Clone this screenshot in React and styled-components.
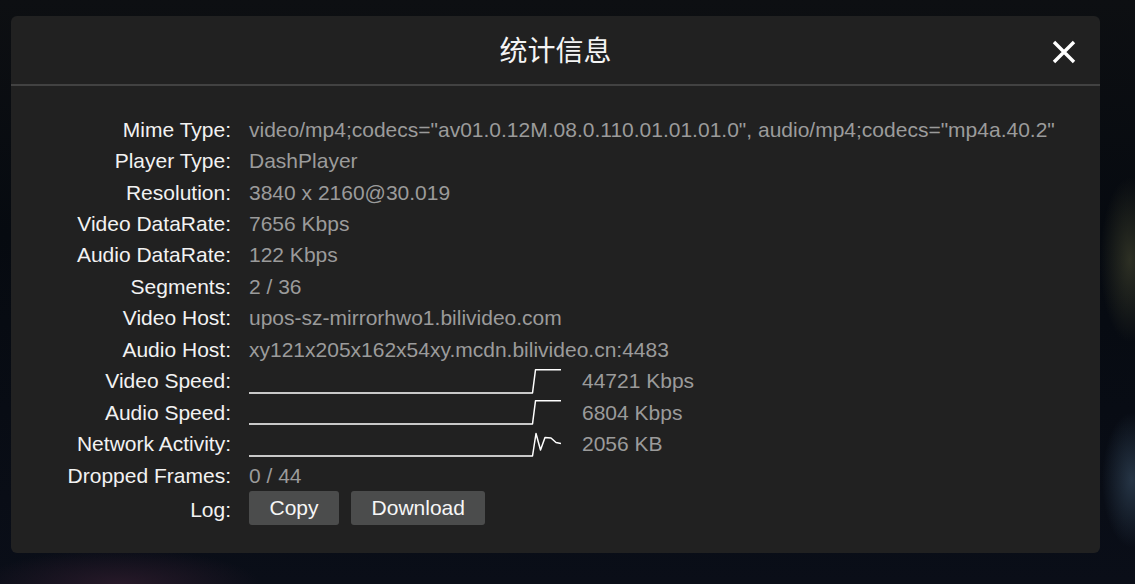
import React from "react";
import styled, { createGlobalStyle } from "styled-components";

const Global = createGlobalStyle`
  html, body { margin: 0; padding: 0; }
  body {
    width: 1135px;
    height: 584px;
    overflow: hidden;
    font-family: "Liberation Sans", Arial, sans-serif;
  }
`;

const Backdrop = styled.div`
  width: 1135px;
  height: 584px;
  box-sizing: border-box;
  padding: 16px 35px 31px 11px;
  background:
    radial-gradient(ellipse 40px 110px at 1130px 260px, rgba(58, 60, 42, 0.75), transparent 75%),
    radial-gradient(ellipse 40px 90px at 1132px 480px, rgba(50, 70, 90, 0.7), transparent 75%),
    radial-gradient(ellipse 200px 50px at 120px 584px, rgba(42, 26, 42, 0.9), transparent 70%),
    linear-gradient(180deg, #0d0f12 0%, #060a10 40%, #0a0e18 100%);
`;

const Modal = styled.div`
  width: 1089px;
  height: 537px;
  background: rgba(34, 34, 34, 0.98);
  border-radius: 6px;
  display: flex;
  flex-direction: column;
  color: #fff;
`;

const Header = styled.div`
  position: relative;
  height: 68px;
  flex: none;
  border-bottom: 2px solid #424242;
  display: flex;
  align-items: center;
  justify-content: center;
`;

const Title = styled.h2`
  margin: 0;
  font-family: "Noto Sans CJK SC", "Noto Sans", sans-serif;
  font-weight: 400;
  font-size: 28px;
  line-height: 1;
  color: #f4f4f4;
  transform: translateY(-1px);
`;

const Close = styled.button`
  position: absolute;
  right: 22px;
  top: 22px;
  width: 28px;
  height: 28px;
  padding: 0;
  border: 0;
  background: transparent;
  display: flex;
  align-items: center;
  justify-content: center;
  cursor: pointer;
`;

const Body = styled.div`
  padding-top: 28px;
  display: grid;
  grid-template-columns: 220px 1fr;
  column-gap: 18px;
  grid-auto-rows: 31.45px;
  font-size: 21px;
`;

const Label = styled.div`
  text-align: right;
  color: #f2f2f2;
  display: flex;
  align-items: center;
  justify-content: flex-end;
  white-space: nowrap;
`;

const Value = styled.div`
  color: #9b9b9b;
  display: flex;
  align-items: center;
  white-space: nowrap;
  gap: 21px;
`;

const Chart = styled.svg`
  width: 312px;
  height: 25px;
  flex: none;
  display: block;
`;

const ButtonRow = styled.div`
  display: flex;
  align-items: center;
  gap: 12px;
  padding-top: 3px;
`;

const Button = styled.button`
  height: 34px;
  padding: 0 20.5px;
  border: 0;
  border-radius: 3px;
  background: #4b4c4c;
  color: #f6f6f6;
  font-family: "Liberation Sans", Arial, sans-serif;
  font-size: 21px;
  cursor: pointer;
`;

const STEP = "M0,24 L283.5,24 L286.5,0.75 L312,0.75";
const NET = "M0,24 L283.5,24 L287,1.5 L291.5,18 L296,5.5 L302,6 L307,10.5 L312,11.5";

function Spark({ d }) {
  return (
    <Chart viewBox="0 0 312 25">
      <path d={d} fill="none" stroke="#fff" strokeWidth="1.5" strokeLinejoin="round" />
    </Chart>
  );
}

const rows = [
  ["Mime Type:", 'video/mp4;codecs="av01.0.12M.08.0.110.01.01.01.0", audio/mp4;codecs="mp4a.40.2"'],
  ["Player Type:", "DashPlayer"],
  ["Resolution:", "3840 x 2160@30.019"],
  ["Video DataRate:", "7656 Kbps"],
  ["Audio DataRate:", "122 Kbps"],
  ["Segments:", "2 / 36"],
  ["Video Host:", "upos-sz-mirrorhwo1.bilivideo.com"],
  ["Audio Host:", "xy121x205x162x54xy.mcdn.bilivideo.cn:4483"],
  ["Video Speed:", "44721 Kbps", STEP],
  ["Audio Speed:", "6804 Kbps", STEP],
  ["Network Activity:", "2056 KB", NET],
  ["Dropped Frames:", "0 / 44"],
];

export default function App() {
  return (
    <>
      <Global />
      <Backdrop>
        <Modal>
          <Header>
            <Title>统计信息</Title>
            <Close aria-label="close">
              <svg width="24" height="24" viewBox="0 0 24 24">
                <path d="M2 2 L22 22 M22 2 L2 22" stroke="#fff" strokeWidth="3.4" strokeLinecap="butt" />
              </svg>
            </Close>
          </Header>
          <Body>
            {rows.map(([l, v, chart]) => (
              <React.Fragment key={l}>
                <Label>{l}</Label>
                <Value>
                  {chart && <Spark d={chart} />}
                  <span>{v}</span>
                </Value>
              </React.Fragment>
            ))}
            <Label style={{ height: 37 }}>Log:</Label>
            <ButtonRow>
              <Button>Copy</Button>
              <Button>Download</Button>
            </ButtonRow>
          </Body>
        </Modal>
      </Backdrop>
    </>
  );
}
